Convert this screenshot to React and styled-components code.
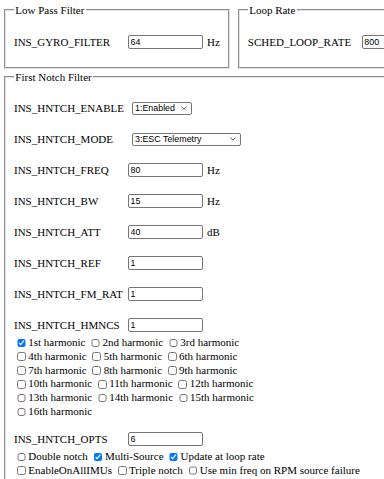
import React from 'react'
import styled, {createGlobalStyle} from 'styled-components'

const GlobalStyle = createGlobalStyle`
  html, body {
    margin: 0;
    padding: 0;
    overflow: hidden;
    background: #fff;
  }
  body {
    font-family: "Liberation Serif", "Times New Roman", serif;
    font-size: 11px;
    color: #000;
  }
`

const Page = styled('div')`
  width: 470px;
  padding: 4px 0 0 4px;
`

const TopRow = styled('div')`
  display: flex;
  align-items: flex-start;
  gap: 8px;
`

const Fieldset = styled('fieldset')`
  margin: ${p => p.$mt || 0}px 0 0 0;
  min-width: 0;
  border: 2px groove #e2e2e2;
  padding: ${p => p.$pad || '2.5px 8px 17.5px'};
  ${p => p.$grow && 'flex: 1;'}
`

const Legend = styled('legend')`
  padding: 0 1.33px;
  line-height: 12px;
  font-size: 11px;
`

const ParamRow = styled('div')`
  display: flex;
  align-items: center;
  height: 15px;
  margin-top: ${p => (p.$mt === undefined ? 16 : p.$mt)}px;
  white-space: nowrap;
`

const Label = styled('span')`
  display: inline-block;
  width: 114px;
  flex: none;
`

const TextInput = styled('input')`
  box-sizing: border-box;
  width: 75px;
  height: 14px;
  margin: 0;
  padding: 0 1.5px;
  border: 1px solid #767676;
  border-radius: 2px;
  font-family: "Liberation Sans", Arial, sans-serif;
  font-size: 8.9px;
  color: #000;
  background: #fff;
  outline: none;
`

const Unit = styled('span')`
  margin-left: 4px;
`

const SelectBox = styled('div')`
  box-sizing: border-box;
  display: flex;
  align-items: center;
  width: ${p => p.$w}px;
  height: 13px;
  margin-left: 4px;
  padding: 0 4px 0 2px;
  border: 1px solid #767676;
  border-radius: 2px;
  background: #fff;

  select {
    flex: 1;
    min-width: 0;
    appearance: none;
    border: none;
    outline: none;
    background: none;
    padding: 0;
    margin: 0;
    font-family: "Liberation Sans", Arial, sans-serif;
    font-size: 8.9px;
    color: #000;
  }
`

const CheckGroup = styled('div')`
  margin-top: ${p => p.$mt || 3.5}px;
`

const CheckRow = styled('div')`
  height: 13.8px;
  line-height: 13.8px;
  white-space: nowrap;
`

const CheckLabel = styled('label')`
  display: inline-flex;
  align-items: center;

  input {
    width: 8.7px;
    height: 8.7px;
    margin: 0 2.5px 0 3.1px;
    accent-color: #0075ff;
  }
`

function Chevron () {
  return (
    <svg width='6' height='4' viewBox='0 0 6 4'>
      <path d='M0.5 0.8 L3 3.2 L5.5 0.8' fill='none' stroke='#333' strokeWidth='0.9' />
    </svg>
  )
}

function Select ({width, value}) {
  return (
    <SelectBox $w={width}>
      <select defaultValue={value}>
        <option>{value}</option>
      </select>
      <Chevron />
    </SelectBox>
  )
}

function Param ({name, value, unit, mt}) {
  return (
    <ParamRow $mt={mt}>
      <Label>{name}</Label>
      <TextInput defaultValue={value} />
      {unit && <Unit>{unit}</Unit>}
    </ParamRow>
  )
}

function Check ({text, checked}) {
  return (
    <CheckLabel>
      <input type='checkbox' defaultChecked={checked} />
      {text}
    </CheckLabel>
  )
}

function Checks ({rows, mt}) {
  return (
    <CheckGroup $mt={mt}>
      {rows.map((row, i) => (
        <CheckRow key={i}>
          {row.map((c, j) => (
            <React.Fragment key={c.text}>
              {j > 0 && ' '}
              <Check text={c.text} checked={c.checked} />
            </React.Fragment>
          ))}
        </CheckRow>
      ))}
    </CheckGroup>
  )
}

const ordinal = n => {
  if (n === 1) return '1st'
  if (n === 2) return '2nd'
  if (n === 3) return '3rd'
  return n + 'th'
}

const harmonicRows = []
for (let i = 0; i < 16; i += 3) {
  const row = []
  for (let j = i; j < Math.min(i + 3, 16); j++) {
    row.push({text: ordinal(j + 1) + ' harmonic', checked: j === 0})
  }
  harmonicRows.push(row)
}

const optionRows = [
  [
    {text: 'Double notch'},
    {text: 'Multi-Source', checked: true},
    {text: 'Update at loop rate', checked: true}
  ],
  [
    {text: 'EnableOnAllIMUs'},
    {text: 'Triple notch'},
    {text: 'Use min freq on RPM source failure'}
  ]
]

export default function App () {
  return (
    <Page>
      <GlobalStyle />
      <TopRow>
        <Fieldset>
          <Legend>Low Pass Filter</Legend>
          <Param name='INS_GYRO_FILTER' value='64' unit='Hz' />
        </Fieldset>
        <Fieldset $grow>
          <Legend>Loop Rate</Legend>
          <Param name='SCHED_LOOP_RATE' value='800' />
        </Fieldset>
      </TopRow>

      <Fieldset $mt={2} $pad='1.5px 8px 20px'>
        <Legend>First Notch Filter</Legend>
        <ParamRow>
          <Label>INS_HNTCH_ENABLE</Label>
          <Select width={60} value='1:Enabled' />
        </ParamRow>
        <ParamRow>
          <Label>INS_HNTCH_MODE</Label>
          <Select width={109} value='3:ESC Telemetry' />
        </ParamRow>
        <Param name='INS_HNTCH_FREQ' value='80' unit='Hz' />
        <Param name='INS_HNTCH_BW' value='15' unit='Hz' />
        <Param name='INS_HNTCH_ATT' value='40' unit='dB' />
        <Param name='INS_HNTCH_REF' value='1' />
        <Param name='INS_HNTCH_FM_RAT' value='1' />
        <Param name='INS_HNTCH_HMNCS' value='1' />
        <Checks rows={harmonicRows} />
        <Param name='INS_HNTCH_OPTS' value='6' mt={12.7} />
        <Checks rows={optionRows} />
      </Fieldset>
    </Page>
  )
}
